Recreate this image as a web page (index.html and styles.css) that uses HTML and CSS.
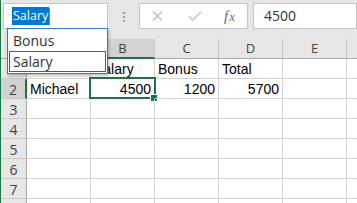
FILE: index.html
```html
<!DOCTYPE html>
<html lang="en">
<head>
    <meta charset="UTF-8">
    <title>Name box</title>
    <link rel="stylesheet" href="styles.css">
</head>
<body>
    <div class="sheet">
        <div class="bar">
            <div class="namebox"><span class="sel">Salary</span><span class="caret"></span></div>
            <div class="dots"><i></i><i></i><i></i></div>
            <div class="fbtns">
                <svg class="x" width="11" height="10" viewBox="0 0 11 10"><path d="M1 0.5L10 9.5M10 0.5L1 9.5" stroke="#bdbdbd" stroke-width="1.3" fill="none"/></svg>
                <svg class="ok" width="14" height="10" viewBox="0 0 14 10"><path d="M1 5.5L4.5 9L13 1" stroke="#c6c6c6" stroke-width="1.6" fill="none"/></svg>
                <span class="fx"><i>f</i>x</span>
            </div>
            <div class="finput">4500</div>
        </div>

        <div class="grid">
            <div class="h corner"></div>
            <div class="h">A</div>
            <div class="h on">B</div>
            <div class="h">C</div>
            <div class="h">D</div>
            <div class="h">E</div>
            <div class="h"></div>

            <div class="r"></div>
            <div class="c"></div>
            <div class="c">Salary</div>
            <div class="c">Bonus</div>
            <div class="c">Total</div>
            <div class="c"></div>
            <div class="c"></div>

            <div class="r on">2</div>
            <div class="c">Michael</div>
            <div class="c num active">4500</div>
            <div class="c num">1200</div>
            <div class="c num">5700</div>
            <div class="c"></div>
            <div class="c"></div>

            <div class="r">3</div>
            <div class="c"></div><div class="c"></div><div class="c"></div><div class="c"></div><div class="c"></div><div class="c"></div>
            <div class="r">4</div>
            <div class="c"></div><div class="c"></div><div class="c"></div><div class="c"></div><div class="c"></div><div class="c"></div>
            <div class="r">5</div>
            <div class="c"></div><div class="c"></div><div class="c"></div><div class="c"></div><div class="c"></div><div class="c"></div>
            <div class="r">6</div>
            <div class="c"></div><div class="c"></div><div class="c"></div><div class="c"></div><div class="c"></div><div class="c"></div>
            <div class="r">7</div>
            <div class="c"></div><div class="c"></div><div class="c"></div><div class="c"></div><div class="c"></div><div class="c"></div>
            <div class="r"></div>
            <div class="c"></div><div class="c"></div><div class="c"></div><div class="c"></div><div class="c"></div><div class="c"></div>
        </div>

        <!-- name box dropdown -->
        <ul class="dropdown">
            <li>Bonus</li>
            <li class="on">Salary</li>
        </ul>
    </div>
</body>
</html>
```

FILE: styles.css
```css
*{
    margin: 0;
    padding: 0;
    box-sizing: border-box;
}
ul{
    list-style: none;
}
body{
    background: #fff;
}
.sheet{
    position: relative;
    width: 357px;
    height: 203px;
    overflow: hidden;
    border-left: 1px solid #217346;
    font-family: "Open Sans", sans-serif;
}
.bar{
    display: flex;
    align-items: flex-start;
    height: 39px;
    padding-top: 3px;
    padding-left: 2px;
    background: #e6e6e6;
}
.namebox{
    display: flex;
    align-items: center;
    width: 105px;
    height: 26px;
    padding-left: 8px;
    background: #fff;
    border: 1px solid #c6c6c6;
    font-size: 12.5px;
}
.namebox .sel{
    background: #0078d7;
    color: #fff;
    line-height: 18px;
    padding: 0 1px;
}
.namebox .caret{
    width: 1px;
    height: 17px;
    background: #e36c0a;
}
.dots{
    display: flex;
    flex-direction: column;
    align-items: center;
    gap: 2px;
    width: 31px;
    padding-top: 9px;
}
.dots i{
    width: 2px;
    height: 2px;
    background: #a0a0a0;
}
.fbtns{
    display: flex;
    align-items: center;
    width: 109px;
    height: 26px;
    padding-left: 12px;
    background: #fff;
    border: 1px solid #c6c6c6;
}
.fbtns .ok{
    margin-left: 25px;
}
.fbtns .fx{
    margin-left: 22px;
    font-family: "Liberation Serif", serif;
    font-style: italic;
    font-size: 13px;
    color: #6a6a6a;
}
.fbtns .fx i{
    font-size: 15px;
    margin-right: 1px;
}
.finput{
    flex: 1;
    height: 26px;
    margin-left: 5px;
    padding-left: 10px;
    background: #fff;
    border: 1px solid #c6c6c6;
    font-size: 14px;
    line-height: 24px;
    color: #333;
}
.grid{
    display: grid;
    grid-template-columns: 26px repeat(6, 64px);
    grid-auto-rows: 20px;
    font-family: "Liberation Sans", sans-serif;
    font-size: 14px;
    color: #000;
}
.h{
    background: #e6e6e6;
    border-right: 1px solid #c8c8c8;
    border-bottom: 1px solid #ababab;
    text-align: center;
    line-height: 19px;
    font-family: "Open Sans", sans-serif;
    font-size: 13px;
    color: #444;
}
.h.on{
    background: #d2d2d2;
    border-bottom: 2px solid #217346;
}
.r{
    background: #e6e6e6;
    border-right: 1px solid #ababab;
    border-bottom: 1px solid #c8c8c8;
    text-align: center;
    line-height: 21px;
    font-family: "Open Sans", sans-serif;
    font-size: 14px;
    color: #444;
}
.r.on{
    background: #d2d2d2;
    border-right: 2px solid #217346;
}
.c{
    position: relative;
    border-right: 1px solid #d4d4d4;
    border-bottom: 1px solid #d4d4d4;
    padding: 0 3px;
    line-height: 21px;
    white-space: nowrap;
}
.c.num{
    text-align: right;
}
.c.active::before{
    content: "";
    position: absolute;
    top: -2px;
    left: -2px;
    right: -2px;
    bottom: -1px;
    border: 2px solid #217346;
}
.c.active::after{
    content: "";
    position: absolute;
    right: -4px;
    bottom: -4px;
    width: 6px;
    height: 6px;
    background: #217346;
    border: 1px solid #fff;
}
.dropdown{
    position: absolute;
    left: 6px;
    top: 28px;
    width: 101px;
    padding: 1px;
    background: #fff;
    border: 1px solid #2b7cd3;
    box-shadow: 1px 2px 3px rgba(0,0,0,0.25);
    font-size: 14px;
    color: #333;
}
.dropdown li{
    height: 21px;
    line-height: 20px;
    padding-left: 3px;
    border: 1px solid transparent;
}
.dropdown li.on{
    border-color: #1e65b4;
}
```
